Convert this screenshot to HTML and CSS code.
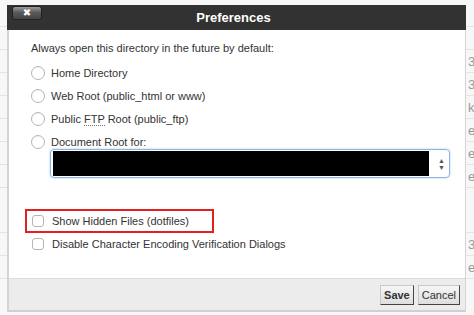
FILE: index.html
```html
<!DOCTYPE html>
<html lang="en">
<head>
    <meta charset="UTF-8">
    <title>Preferences</title>
    <link rel="stylesheet" href="styles.css">
</head>
<body>
    <div class="page">
        <div class="row"><span class="cell"></span></div>
        <div class="row"><span class="cell"></span></div>
        <div class="row"><span class="cell">3</span></div>
        <div class="row"><span class="cell">3</span></div>
        <div class="row"><span class="cell">k</span></div>
        <div class="row"><span class="cell">e</span></div>
        <div class="row"><span class="cell">e</span></div>
        <div class="row"><span class="cell">e</span></div>
        <div class="row tall"><span class="cell"></span></div>
        <div class="row"><span class="cell">3</span></div>
        <div class="row"><span class="cell">e</span></div>
    </div>

    <div class="dialog">
        <div class="titlebar">
            <button class="close">&#x2716;</button>
            <h2>Preferences</h2>
        </div>
        <div class="content">
            <p class="intro">Always open this directory in the future by default:</p>
            <label class="option"><span class="radio"></span><span>Home Directory</span></label>
            <label class="option"><span class="radio"></span><span>Web Root (public_html or www)</span></label>
            <label class="option"><span class="radio"></span><span>Public <abbr>FTP</abbr> Root (public_ftp)</span></label>
            <label class="option"><span class="radio"></span><span>Document Root for:</span></label>
            <div class="select">
                <div class="redacted"></div>
                <span class="arrows">&#x25B2;<br>&#x25BC;</span>
            </div>
            <div class="checks">
                <label class="option check highlight"><span class="box"></span><span>Show Hidden Files (dotfiles)</span></label>
                <label class="option check"><span class="box"></span><span>Disable Character Encoding Verification Dialogs</span></label>
            </div>
        </div>
        <div class="footer">
            <button class="btn save">Save</button>
            <button class="btn">Cancel</button>
        </div>
    </div>
</body>
</html>
```

FILE: styles.css
```css
body {
    margin: 0;
    font-family: 'Liberation Sans', Arial, sans-serif;
    background-color: #f7f7f7;
    color: #333;
    width: 474px;
    height: 315px;
    overflow: hidden;
    position: relative;
}

.page {
    padding-top: 4px;
}

.row {
    height: 22px;
    border-bottom: 1px solid #e4e4e4;
    display: flex;
    justify-content: flex-end;
    align-items: center;
}

.row.tall {
    height: 44px;
}

.cell {
    width: 6px;
    font-size: 13px;
    color: #999;
    overflow: hidden;
    white-space: nowrap;
}

.dialog {
    position: absolute;
    left: 7px;
    top: 5px;
    width: 459px;
    height: 307px;
    background-color: #fff;
    border-left: 2px solid #d4d4d4;
    border-right: 1px solid #d4d4d4;
    border-bottom: 2px solid #d0d0d0;
    box-sizing: border-box;
    display: flex;
    flex-direction: column;
}

.titlebar {
    height: 25px;
    background-color: #323232;
    display: flex;
    align-items: center;
    position: relative;
    margin-left: -2px;
    margin-right: -1px;
}

.titlebar h2 {
    flex: 1;
    margin: 0;
    text-align: center;
    color: #fff;
    font-size: 13px;
    font-weight: bold;
    padding-right: 6px;
}

.close {
    position: absolute;
    left: 5px;
    top: 1px;
    width: 30px;
    height: 14px;
    padding: 0;
    border: 1px solid #222;
    border-radius: 3px;
    background: linear-gradient(#9a9a9a, #5a5a5a 45%, #444);
    color: #fff;
    font-size: 10px;
    font-weight: bold;
    line-height: 12px;
    font-family: 'DejaVu Sans', sans-serif;
}

.content {
    flex: 1;
    padding: 12px 0 0 22px;
}

.intro {
    margin: 0 0 7px;
    font-size: 11px;
}

.option {
    display: flex;
    align-items: center;
    height: 23px;
    font-size: 11px;
}

.radio {
    width: 12px;
    height: 12px;
    border: 1px solid #b5b5b5;
    border-radius: 50%;
    margin-right: 6px;
    box-shadow: inset 0 1px 1px rgba(0, 0, 0, 0.05);
}

abbr {
    text-decoration: none;
    border-bottom: 1px dotted #777;
}

.select {
    margin: -4px 0 0 19px;
    width: 400px;
    height: 29px;
    border: 1px solid #8fb5dd;
    border-radius: 4px;
    box-shadow: 0 0 2px rgba(90, 150, 220, 0.6);
    box-sizing: border-box;
    display: flex;
    align-items: center;
    padding-left: 2px;
}

.redacted {
    width: 376px;
    height: 25px;
    background-color: #000;
}

.arrows {
    margin-left: 9px;
    font-size: 7px;
    line-height: 7px;
    color: #555;
}

.checks {
    margin: 31px 0 0 -6px;
}

.check {
    padding-left: 5px;
    height: 20px;
}

.check.highlight {
    width: 180px;
    border: 2px solid #e0211f;
    margin-bottom: 1px;
}

.check:not(.highlight) {
    margin-left: 2px;
}

.box {
    width: 10px;
    height: 10px;
    border: 1px solid #b5b5b5;
    border-radius: 3px;
    margin-right: 8px;
}

.footer {
    height: 31px;
    background-color: #ececec;
    border-top: 1px solid #dcdcdc;
    display: flex;
    justify-content: flex-end;
    align-items: center;
    gap: 4px;
    padding-right: 5px;
}

.btn {
    height: 20px;
    padding: 0 3px;
    font-family: 'Liberation Sans', Arial, sans-serif;
    font-size: 11px;
    color: #333;
    background: linear-gradient(#f6f6f6, #dedede);
    border: 1px solid #c8c8c8;
    border-right-color: #444;
    border-bottom-color: #444;
}

.save {
    font-weight: bold;
}
```
